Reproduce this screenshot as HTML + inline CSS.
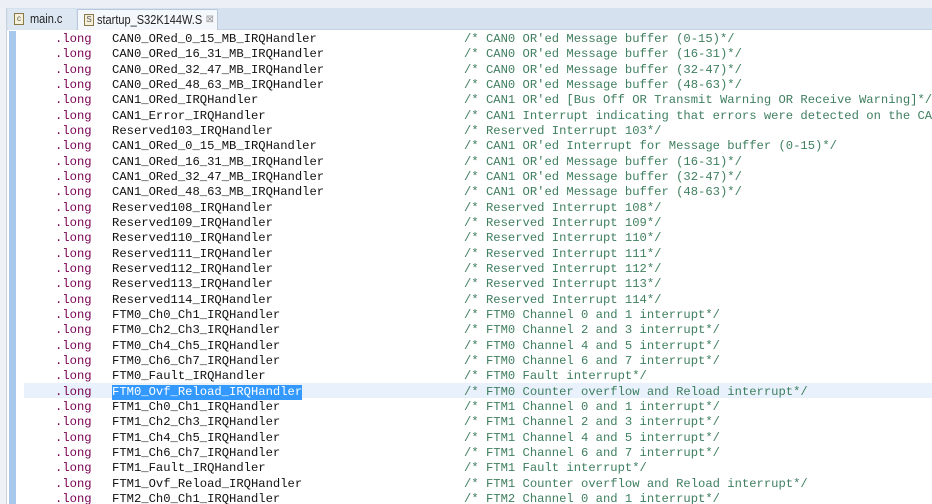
<!DOCTYPE html>
<html><head><meta charset="utf-8"><style>
*{margin:0;padding:0;box-sizing:border-box}
body{width:932px;height:504px;overflow:hidden;background:#fff;position:relative;font-family:"Liberation Sans",sans-serif}
.top{position:absolute;left:0;top:0;width:932px;height:8px;background:#eceff6}
.tabbar{position:absolute;left:0;top:8px;width:932px;height:22px;background:#d5e1ef;border-bottom:1px solid #c5d3e3}
.leftpane{position:absolute;left:0;top:8px;width:7px;height:496px;background:#eef1f6;border-right:1px solid #c9d3df}
.tab{position:absolute;top:9px;height:21px;font-size:12.5px;color:#222;line-height:20px;white-space:nowrap;overflow:hidden}
.tab .lb{position:absolute;left:22px;top:0;display:inline-block;transform:scaleX(0.88);transform-origin:left center}
.t1{left:8px;width:68px;background:#dde7f2}
.t2{left:77px;width:141px;background:#f4f7fb;border:1px solid #b9c8da;border-bottom:none}
.t2 .lb{left:19px}
.ic{position:absolute;left:6px;top:4px;width:10px;height:12px;border:1px solid #8a7a4a;background:#f6f0d8;font-size:8px;line-height:10px;text-align:center;color:#555}
.x{position:absolute;right:3px;top:0;font-size:10px;color:#999}
.stripe{position:absolute;left:9px;top:31px;width:7px;height:473px;background:#a9c9ec}
.hl{position:absolute;left:24px;top:383px;width:908px;height:15px;background:#e8f1fc}
.code{position:absolute;left:0;top:32px;width:932px;height:472px;overflow:hidden;font-family:"Liberation Mono",monospace;font-size:12.2px;line-height:15.33px}
.row{position:relative;height:15.33px}
.row span{position:absolute;white-space:pre;top:0}
.k{left:55px;color:#7a0052}
.n{left:112px;color:#111}
.c{left:464px;color:#3f7f5f}
.sel{background:#3399ff;color:#fff !important}
</style></head><body>
<div class="top"></div>
<div class="tabbar"></div>
<div class="leftpane"></div>
<div class="tab t1"><span class="ic">c</span><span class="lb">main.c</span></div>
<div class="tab t2"><span class="ic">S</span><span class="lb">startup_S32K144W.S</span><span class="x">⊠</span></div>
<div class="stripe"></div>
<div class="hl"></div>
<div class="code"><div class="row"><span class="k">.long</span><span class="n">CAN0_ORed_0_15_MB_IRQHandler</span><span class="c">/* CAN0 OR'ed Message buffer (0-15)*/</span></div><div class="row"><span class="k">.long</span><span class="n">CAN0_ORed_16_31_MB_IRQHandler</span><span class="c">/* CAN0 OR'ed Message buffer (16-31)*/</span></div><div class="row"><span class="k">.long</span><span class="n">CAN0_ORed_32_47_MB_IRQHandler</span><span class="c">/* CAN0 OR'ed Message buffer (32-47)*/</span></div><div class="row"><span class="k">.long</span><span class="n">CAN0_ORed_48_63_MB_IRQHandler</span><span class="c">/* CAN0 OR'ed Message buffer (48-63)*/</span></div><div class="row"><span class="k">.long</span><span class="n">CAN1_ORed_IRQHandler</span><span class="c">/* CAN1 OR'ed [Bus Off OR Transmit Warning OR Receive Warning]*/</span></div><div class="row"><span class="k">.long</span><span class="n">CAN1_Error_IRQHandler</span><span class="c">/* CAN1 Interrupt indicating that errors were detected on the CAN bus*/</span></div><div class="row"><span class="k">.long</span><span class="n">Reserved103_IRQHandler</span><span class="c">/* Reserved Interrupt 103*/</span></div><div class="row"><span class="k">.long</span><span class="n">CAN1_ORed_0_15_MB_IRQHandler</span><span class="c">/* CAN1 OR'ed Interrupt for Message buffer (0-15)*/</span></div><div class="row"><span class="k">.long</span><span class="n">CAN1_ORed_16_31_MB_IRQHandler</span><span class="c">/* CAN1 OR'ed Message buffer (16-31)*/</span></div><div class="row"><span class="k">.long</span><span class="n">CAN1_ORed_32_47_MB_IRQHandler</span><span class="c">/* CAN1 OR'ed Message buffer (32-47)*/</span></div><div class="row"><span class="k">.long</span><span class="n">CAN1_ORed_48_63_MB_IRQHandler</span><span class="c">/* CAN1 OR'ed Message buffer (48-63)*/</span></div><div class="row"><span class="k">.long</span><span class="n">Reserved108_IRQHandler</span><span class="c">/* Reserved Interrupt 108*/</span></div><div class="row"><span class="k">.long</span><span class="n">Reserved109_IRQHandler</span><span class="c">/* Reserved Interrupt 109*/</span></div><div class="row"><span class="k">.long</span><span class="n">Reserved110_IRQHandler</span><span class="c">/* Reserved Interrupt 110*/</span></div><div class="row"><span class="k">.long</span><span class="n">Reserved111_IRQHandler</span><span class="c">/* Reserved Interrupt 111*/</span></div><div class="row"><span class="k">.long</span><span class="n">Reserved112_IRQHandler</span><span class="c">/* Reserved Interrupt 112*/</span></div><div class="row"><span class="k">.long</span><span class="n">Reserved113_IRQHandler</span><span class="c">/* Reserved Interrupt 113*/</span></div><div class="row"><span class="k">.long</span><span class="n">Reserved114_IRQHandler</span><span class="c">/* Reserved Interrupt 114*/</span></div><div class="row"><span class="k">.long</span><span class="n">FTM0_Ch0_Ch1_IRQHandler</span><span class="c">/* FTM0 Channel 0 and 1 interrupt*/</span></div><div class="row"><span class="k">.long</span><span class="n">FTM0_Ch2_Ch3_IRQHandler</span><span class="c">/* FTM0 Channel 2 and 3 interrupt*/</span></div><div class="row"><span class="k">.long</span><span class="n">FTM0_Ch4_Ch5_IRQHandler</span><span class="c">/* FTM0 Channel 4 and 5 interrupt*/</span></div><div class="row"><span class="k">.long</span><span class="n">FTM0_Ch6_Ch7_IRQHandler</span><span class="c">/* FTM0 Channel 6 and 7 interrupt*/</span></div><div class="row"><span class="k">.long</span><span class="n">FTM0_Fault_IRQHandler</span><span class="c">/* FTM0 Fault interrupt*/</span></div><div class="row"><span class="k">.long</span><span class="n sel">FTM0_Ovf_Reload_IRQHandler</span><span class="c">/* FTM0 Counter overflow and Reload interrupt*/</span></div><div class="row"><span class="k">.long</span><span class="n">FTM1_Ch0_Ch1_IRQHandler</span><span class="c">/* FTM1 Channel 0 and 1 interrupt*/</span></div><div class="row"><span class="k">.long</span><span class="n">FTM1_Ch2_Ch3_IRQHandler</span><span class="c">/* FTM1 Channel 2 and 3 interrupt*/</span></div><div class="row"><span class="k">.long</span><span class="n">FTM1_Ch4_Ch5_IRQHandler</span><span class="c">/* FTM1 Channel 4 and 5 interrupt*/</span></div><div class="row"><span class="k">.long</span><span class="n">FTM1_Ch6_Ch7_IRQHandler</span><span class="c">/* FTM1 Channel 6 and 7 interrupt*/</span></div><div class="row"><span class="k">.long</span><span class="n">FTM1_Fault_IRQHandler</span><span class="c">/* FTM1 Fault interrupt*/</span></div><div class="row"><span class="k">.long</span><span class="n">FTM1_Ovf_Reload_IRQHandler</span><span class="c">/* FTM1 Counter overflow and Reload interrupt*/</span></div><div class="row"><span class="k">.long</span><span class="n">FTM2_Ch0_Ch1_IRQHandler</span><span class="c">/* FTM2 Channel 0 and 1 interrupt*/</span></div></div>
</body></html>
